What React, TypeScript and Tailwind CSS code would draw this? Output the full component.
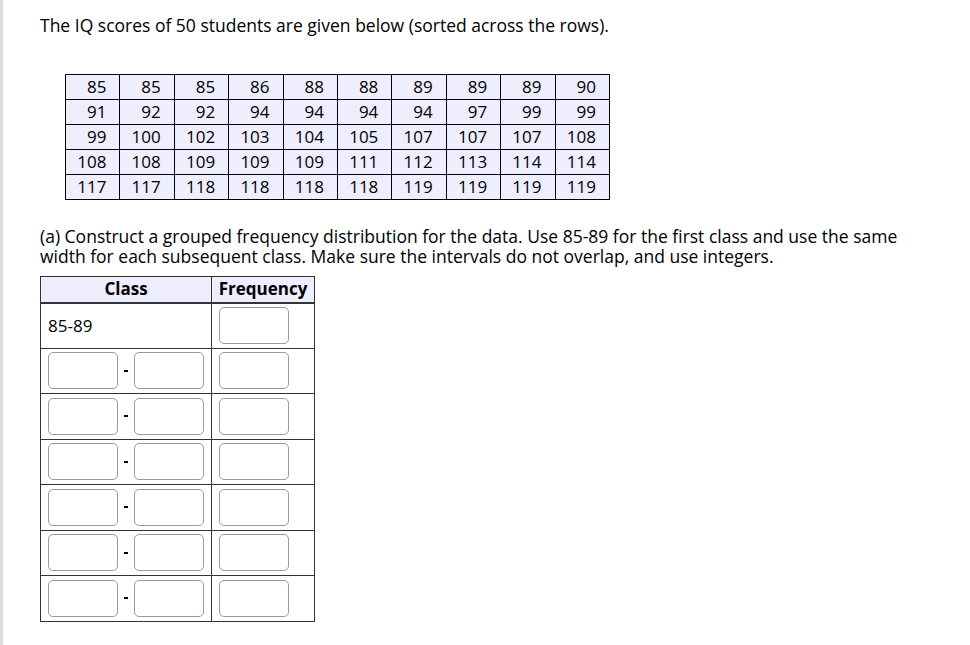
import React from 'react';

const scores: number[][] = [
    [85, 85, 85, 86, 88, 88, 89, 89, 89, 90],
    [91, 92, 92, 94, 94, 94, 94, 97, 99, 99],
    [99, 100, 102, 103, 104, 105, 107, 107, 107, 108],
    [108, 108, 109, 109, 109, 111, 112, 113, 114, 114],
    [117, 117, 118, 118, 118, 118, 119, 119, 119, 119],
];

const AnswerBox: React.FC = () => (
    <input
        type="text"
        className="block h-[37px] w-[70px] rounded-[5px] border border-[#9a9a9a] bg-white outline-none"
    />
);

const App = () => {
    return (
        <div className="min-h-screen border-l-[3px] border-[#dedede] bg-white pl-[37px] pt-[15px] font-['Open_Sans',sans-serif] text-[17.5px] leading-[20px] text-black">
            <p>The IQ scores of 50 students are given below (sorted across the rows).</p>

            <table className="ml-[25px] mt-[39px] w-[545px] table-fixed border-collapse text-[17px]">
                <tbody>
                    {scores.map((row, i) => (
                        <tr key={i}>
                            {row.map((n, j) => (
                                <td key={j} className="h-[25px] border border-black bg-[#eeeeff] p-0 pr-[13px] text-right align-middle">
                                    {n}
                                </td>
                            ))}
                        </tr>
                    ))}
                </tbody>
            </table>

            <p className="mt-[26px] w-[900px]">
                (a) Construct a grouped frequency distribution for the data. Use 85-89 for the first class and use the same
                width for each subsequent class. Make sure the intervals do not overlap, and use integers.
            </p>

            <table className="mt-[10px] w-[275px] table-fixed border-collapse text-[17px]">
                <thead>
                    <tr>
                        <th className="h-[26px] w-[171px] border border-b-2 border-[#333] bg-[#eeeeff] p-0 text-center font-bold">Class</th>
                        <th className="h-[26px] border border-b-2 border-[#333] bg-[#eeeeff] p-0 text-center font-bold">Frequency</th>
                    </tr>
                </thead>
                <tbody>
                    <tr>
                        <td className="h-[45.5px] border border-[#333] pl-[7px] align-middle">85-89</td>
                        <td className="h-[45.5px] border border-[#333] pl-[7px] align-middle">
                            <AnswerBox />
                        </td>
                    </tr>
                    {[0, 1, 2, 3, 4, 5].map(i => (
                        <tr key={i}>
                            <td className="h-[45.5px] border border-[#333] pl-[7px] align-middle">
                                <div className="flex items-center">
                                    <AnswerBox />
                                    <span className="mx-[6px] h-[2px] w-[4px] bg-black" />
                                    <AnswerBox />
                                </div>
                            </td>
                            <td className="h-[45.5px] border border-[#333] pl-[7px] align-middle">
                                <AnswerBox />
                            </td>
                        </tr>
                    ))}
                </tbody>
            </table>
        </div>
    );
};

export default App;
